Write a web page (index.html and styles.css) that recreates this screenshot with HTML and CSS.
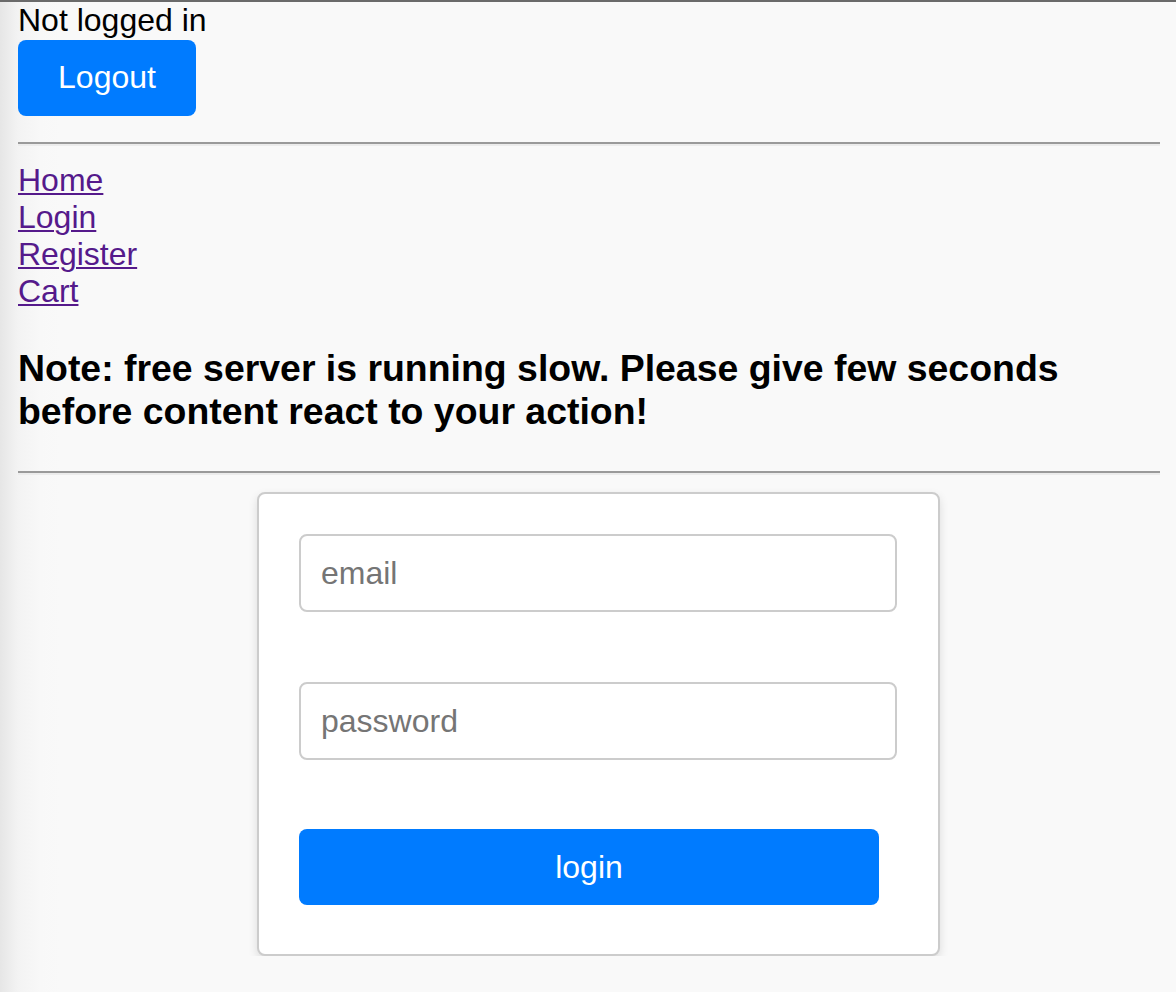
FILE: index.html
```html
<!DOCTYPE html>
<html lang="en">
<head>
<meta charset="utf-8">
<title>Login</title>
<link rel="stylesheet" href="styles.css">
</head>
<body>
<div class="page">
  <header class="account">
    <div class="status">Not logged in</div>
    <button class="btn btn-logout" type="button">Logout</button>
  </header>
  <hr class="rule rule-top">
  <nav class="nav">
    <a href="#home" class="nav-link">Home</a>
    <a href="#login" class="nav-link">Login</a>
    <a href="#register" class="nav-link">Register</a>
    <a href="#cart" class="nav-link">Cart</a>
  </nav>
  <h3 class="note">Note: free server is running slow. Please give few seconds before content react to your action!</h3>
  <hr class="rule rule-bottom">
  <main class="card">
    <form class="login-form">
      <input class="field" type="email" placeholder="email">
      <input class="field field-password" type="password" placeholder="password">
      <button class="btn btn-login" type="button">login</button>
    </form>
  </main>
</div>
</body>
</html>
```

FILE: styles.css
```css
html {
  border-top: 2px solid #6a6a6a;
  background: linear-gradient(to right, #e6e6e6 0px, #f3f3f3 18px, #f8f8f8 40px, #f9f9f9 60px);
  min-height: 100%;
}

body {
  margin: 0;
  font-family: "Liberation Sans", Arial, sans-serif;
  font-size: 32px;
  line-height: 37px;
  color: #000;
}

.page {
  padding: 0 16px 0 18px;
}

.account {
  display: flex;
  flex-direction: column;
  align-items: flex-start;
}

.status {
  line-height: 37px;
}

.btn {
  font-family: "Liberation Sans", Arial, sans-serif;
  font-size: 32px;
  line-height: 37px;
  color: #fff;
  background: #007bff;
  border: none;
  border-radius: 8px;
  cursor: pointer;
}

.btn-logout {
  margin-top: 1px;
  width: 178px;
  height: 76px;
  padding: 0 0 2px;
}

.rule {
  border: none;
  border-top: 2px solid #9a9a9a;
  border-bottom: 2px solid #ececec;
  height: 0;
  margin: 0;
}

.rule-top {
  margin-top: 26px;
}

.nav {
  display: flex;
  flex-direction: column;
  align-items: flex-start;
  margin-top: 16px;
}

.nav-link {
  color: #551a8b;
  text-decoration: underline;
  text-decoration-thickness: 2px;
  text-underline-offset: 2px;
  line-height: 37px;
}

.note {
  margin: 37px 0 0;
  font-size: 37.44px;
  line-height: 43px;
  font-weight: bold;
}

.rule-bottom {
  margin-top: 38px;
}

.card {
  margin: 17px 0 0 239px;
  width: 683px;
  box-sizing: border-box;
  background: #fff;
  border: 2px solid #cccccc;
  border-radius: 8px;
  padding: 40px 41px 49px 40px;
  box-shadow: 0 4px 10px rgba(0, 0, 0, 0.12);
}

.login-form {
  display: flex;
  flex-direction: column;
  align-items: flex-start;
}

.field {
  width: 100%;
  height: 78px;
  box-sizing: border-box;
  border: 2px solid #cccccc;
  border-radius: 8px;
  padding: 0 20px;
  font-family: "Liberation Sans", Arial, sans-serif;
  font-size: 32px;
  color: #000;
  background: #fff;
  outline: none;
}

.field::placeholder {
  color: #757575;
}

.field-password {
  margin-top: 70px;
}

.btn-login {
  margin-top: 69px;
  width: 580px;
  height: 76px;
  padding: 0;
}
```
